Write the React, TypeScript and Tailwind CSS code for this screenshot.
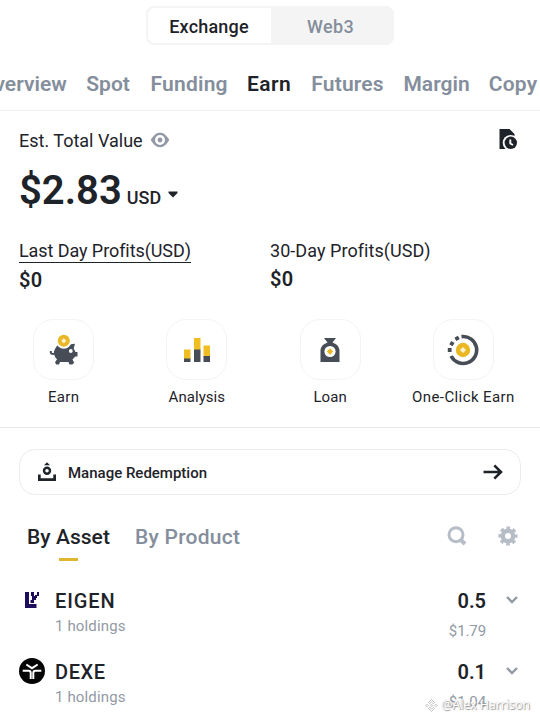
import type { ReactNode } from "react"

const tabs = [
  { label: "Overview", className: "w-[87px] -ml-[20px]" },
  { label: "Spot", className: "w-[45px]" },
  { label: "Funding", className: "w-[77px] tracking-[0.2px]" },
  { label: "Earn", className: "w-[45px] tracking-[0.5px] text-[#1e2329]!" },
  { label: "Futures", className: "w-[73px] tracking-[0.2px]" },
  { label: "Margin", className: "w-[66px]" },
  { label: "Copy", className: "w-[60px] tracking-[0.2px]" },
]

function EyeIcon() {
  return (
    <svg width="20" height="16" viewBox="0 0 20 16" fill="none">
      <path d="M10 .8C6 .8 3.500 3.500.7 8 3.500 12.500 6 15.200 10 15.200S16.500 12.500 19.300 8C16.500 3.500 14 .8 10 .8Z" fill="#929aa5" />
      <circle cx="10" cy="8" r="3.700" stroke="#fff" strokeWidth="2.500" />
    </svg>
  )
}

function HistoryIcon() {
  return (
    <svg width="20" height="22" viewBox="0 0 20 22" fill="none">
      <path d="M1.500 1h10l5 5v5H10v10H1.500Z" fill="#1e2329" />
      <circle cx="12.500" cy="14.800" r="7.800" fill="#fff" />
      <circle cx="12.800" cy="14.800" r="6.200" fill="#1e2329" />
      <path d="M12.300 11.500v4l2.700 1.500" stroke="#fff" strokeWidth="1.900" />
    </svg>
  )
}

function PiggyIcon() {
  return (
    <svg width="30" height="32" viewBox="0 0 30 32" fill="none">
      <path d="M6 15c.8-1.500 1.800-3 3-4h10.500c1.500-.2 3-1.200 6.500-1.200l-1.300 4.700 1.800 3.500h2v4.500h-2.200l-2.800 3 1.700 3.200-2 1.800h-2.700l-1-2.500h-8.500l-1 2.500H7.300l-1.300-2 2-3.300C5.800 23.300 5 21 4.800 18Z" fill="#474d57" />
      <path d="M1.800 17v1.500c0 1 .8 1.500 3.200 1.500" stroke="#474d57" strokeWidth="2" />
      <circle cx="14.800" cy="7" r="7.700" fill="#fff" />
      <circle cx="14.800" cy="6.800" r="6" fill="#e9b824" />
      <path d="m14.800 4.200 2.600 2.600-2.600 2.600-2.600-2.600Z" fill="#fdf3cf" />
      <circle cx="21.800" cy="17" r="1.900" fill="#fff" />
    </svg>
  )
}

function AnalysisIcon() {
  return (
    <svg width="28" height="26" viewBox="0 0 28 26">
      <path d="M1 12.500h6.500V22H1ZM11 1h6.500v12H11ZM20.500 8.500H27V20h-6.500Z" fill="#f0bd22" />
      <path d="M1 21.500h6.500V25H1ZM11 12.500h6.500V25H11ZM20.500 19H27v6h-6.500Z" fill="#474d57" />
    </svg>
  )
}

function LoanIcon() {
  return (
    <svg width="20" height="26" viewBox="0 0 20 26">
      <path d="M4 1h12l-3.500 4.500C17 7 19.500 10 19.500 14v11H.5V14C.5 10 3 7 7.500 5.500Z" fill="#474d57" />
      <circle cx="10" cy="14.500" r="5.600" fill="#fff" />
      <path d="m10 11.300 3.200 3.200-3.200 3.200-3.200-3.200Z" fill="#e9b824" />
    </svg>
  )
}

function OneClickIcon() {
  return (
    <svg width="32" height="32" viewBox="0 0 32 32" fill="none">
      <path d="M14.500 2.600A13.500 13.500 0 1 1 4.100 22" stroke="#474d57" strokeWidth="3.600" />
      <path d="M2.700 18v-4M3.900 11.200l2-3.300M8.400 5.400l3.400-2" stroke="#474d57" strokeWidth="3.800" />
      <circle cx="16" cy="16" r="7.200" fill="#e9b824" />
      <path d="m16 13 3 3-3 3-3-3Z" fill="#fdf3cf" />
    </svg>
  )
}

function RedeemIcon() {
  return (
    <svg width="18" height="20" viewBox="0 0 18 20" fill="none">
      <path d="M1.300 12.500v5.200h15.400v-5.200" stroke="#1e2329" strokeWidth="2.800" />
      <circle cx="9" cy="8.800" r="3" stroke="#1e2329" strokeWidth="2.400" />
      <path d="M9 .3 12 3.300H6Z" fill="#1e2329" />
    </svg>
  )
}

function ArrowIcon() {
  return (
    <svg width="20" height="16" viewBox="0 0 20 16" fill="none" stroke="#1e2329" strokeWidth="2.600">
      <path d="M.5 8h17M11.300 1.300 18 8l-6.700 6.700" />
    </svg>
  )
}

function SearchIcon() {
  return (
    <svg width="20" height="20" viewBox="0 0 20 20" fill="none" stroke="#b7bdc6">
      <circle cx="9" cy="8.700" r="7" strokeWidth="3" />
      <path d="m13.500 13.500 4.500 4.500" strokeWidth="4" />
    </svg>
  )
}

function GearIcon() {
  return (
    <svg width="20" height="20" viewBox="0 0 20 20" fill="none" stroke="#b7bdc6">
      <circle cx="10" cy="10" r="5.200" strokeWidth="4.400" />
      <circle cx="10" cy="10" r="8" strokeWidth="3.200" strokeDasharray="3.500 2.783" strokeDashoffset="1.750" />
    </svg>
  )
}

function ChevronIcon() {
  return (
    <svg width="12" height="8" viewBox="0 0 12 8" fill="none" stroke="#929aa5" strokeWidth="2.400">
      <path d="m1 1 5 5 5-5" />
    </svg>
  )
}

function EigenLogo() {
  return (
    <svg width="26" height="26" viewBox="0 0 26 26" fill="#1e0c5c">
      <path d="M6 5h4v12h7.500v4H6ZM12 5h3v4h2v4h-2v3h-3.500v-3h1.500V9h-1ZM18 5h2v4h-2zM16 8h2v3h-2z" />
    </svg>
  )
}

function DexeLogo() {
  return (
    <svg width="26" height="26" viewBox="0 0 26 26" fill="none">
      <circle cx="13" cy="13" r="13" fill="#050505" />
      <path d="M7.300 6.500 13 10.200l5.700-3.700M3.700 12.700h6q2 0 2 2.300v6M22.300 12.700h-6q-2 0-2 2.300v6" stroke="#fff" strokeWidth="2" />
    </svg>
  )
}

function Shortcut({ label, className, children }: { label: string; className: string; children: ReactNode }) {
  return (
    <div className="flex flex-col items-center">
      <div className="flex h-[61px] w-[61px] items-center justify-center rounded-[20px] border border-[#f3f4f5]">
        {children}
      </div>
      <span className={`mt-[7px] text-[15px] leading-5 whitespace-nowrap ${className}`}>{label}</span>
    </div>
  )
}

interface HoldingProps {
  logo: ReactNode
  name: string
  nameClass: string
  amount: string
  value: string
}

function Holding({ logo, name, nameClass, amount, value }: HoldingProps) {
  return (
    <div className="flex h-[71px] pr-[22px] pl-[19px]">
      <div className="mt-[7px] w-[36px]">{logo}</div>
      <div className="flex-1">
        <div className={`mt-[9px] text-[20px] leading-6 font-medium ${nameClass}`}>{name}</div>
        <div className="mt-[3px] text-[15px] leading-5 tracking-[0.15px] text-[#929aa5]">1 holdings</div>
      </div>
      <div className="text-right">
        <div className="mt-[9px] text-[20px] leading-6 font-semibold">{amount}</div>
        <div className="mt-[8px] text-[15px] leading-5 tracking-[-0.1px] text-[#929aa5]">{value}</div>
      </div>
      <div className="mt-[16px] ml-[20px] w-[12px]">
        <ChevronIcon />
      </div>
    </div>
  )
}

export default function App() {
  return (
    <div className="relative h-[720px] w-[540px] overflow-hidden bg-white font-[Roboto,sans-serif] text-[#1e2329]">
      {/* ACCOUNT SWITCH */}
      <div className="flex justify-center pt-[6px]">
        <div className="flex h-[39px] w-[248px] overflow-hidden rounded-[8px] border-2 border-[#f4f4f4] bg-[#f4f4f4] text-[18px] font-medium">
          <div className="flex w-[123px] items-center justify-center rounded-l-[6px] bg-white pt-[2px] pr-[1px] tracking-[0.2px]">Exchange</div>
          <div className="flex flex-1 items-center justify-center pt-[2px] pr-[2px] tracking-[0.4px] text-[#848e9c]">Web3</div>
        </div>
      </div>

      {/* WALLET TABS */}
      <div className="flex h-[66px] items-center gap-[19.300px] overflow-hidden border-b border-[#eeeff1] pt-[14px] text-[21px] font-semibold whitespace-nowrap text-[#848e9c]">
        {tabs.map((tab) => (
          <span key={tab.label} className={`shrink-0 ${tab.className}`}>{tab.label}</span>
        ))}
      </div>

      {/* BALANCE */}
      <div className="flex h-[59px] items-center pr-[22px] pl-[19px]">
        <span className="text-[18px]">Est. Total Value</span>
        <div className="-mt-[2px] ml-[7px] flex-1">
          <EyeIcon />
        </div>
        <div className="-mt-[3px]">
          <HistoryIcon />
        </div>
      </div>
      <div className="flex h-[49px] items-baseline pt-[1px] pl-[19px] leading-[40px]">
        <span className="text-[40px] font-semibold">$2.83</span>
        <span className="ml-[5px] text-[18px] font-medium">USD</span>
        <svg className="mt-[20px] ml-[7px] self-start" width="10" height="7" viewBox="0 0 10 7" fill="#1e2329">
          <path d="M.5.5h9V2L5 6.500.5 2Z" />
        </svg>
      </div>
      <div className="flex pt-[20px] pl-[19px]">
        <div className="w-[251px]">
          <span className="inline-block h-[24px] border-b border-[#1e2329] text-[18px] leading-[24px] tracking-[-0.08px]">Last Day Profits(USD)</span>
          <div className="mt-[4px] text-[20px] leading-6 font-semibold tracking-[0.3px]">$0</div>
        </div>
        <div>
          <div className="text-[18px] leading-[24px] tracking-[0.05px]">30-Day Profits(USD)</div>
          <div className="mt-[4px] text-[20px] leading-6 font-semibold tracking-[0.3px]">$0</div>
        </div>
      </div>

      {/* SHORTCUTS */}
      <div className="mt-[27px] -ml-[3px] grid h-[108px] w-[533px] grid-cols-4">
        <Shortcut label="Earn" className="tracking-[0.3px]"><PiggyIcon /></Shortcut>
        <Shortcut label="Analysis" className="tracking-[0.05px]"><AnalysisIcon /></Shortcut>
        <Shortcut label="Loan" className="tracking-[0.1px]"><LoanIcon /></Shortcut>
        <Shortcut label="One-Click Earn" className="tracking-[0.4px]"><OneClickIcon /></Shortcut>
      </div>

      <div className="border-t border-[#e6e8ea] px-[19px] pt-[21px]">
        <div className="flex h-[46px] items-center rounded-[16px] border border-[#eaecef] pr-[17px] pl-[18px]">
          <RedeemIcon />
          <span className="ml-[12px] flex-1 pt-[3px] text-[15px] font-medium">Manage Redemption</span>
          <ArrowIcon />
        </div>
      </div>

      {/* ASSET TABS */}
      <div className="flex h-[89px] pt-[27px] pr-[22px] pl-[27px] text-[21px] leading-[30px] font-medium">
        <div className="w-[108px]">
          <div className="tracking-[0.05px]">By Asset</div>
          <div className="mt-[6px] ml-[32px] h-[3px] w-[19px] bg-[#e0b62f]" />
        </div>
        <div className="flex-1 tracking-[0.25px] text-[#848e9c]">By Product</div>
        <div className="flex gap-[31px] pt-[4px]">
          <SearchIcon />
          <GearIcon />
        </div>
      </div>

      {/* HOLDINGS */}
      <div className="-mt-[4px]">
        <Holding logo={<EigenLogo />} name="EIGEN" nameClass="tracking-[0.9px]" amount="0.5" value="$1.79" />
        <Holding logo={<DexeLogo />} name="DEXE" nameClass="tracking-[0.6px]" amount="0.1" value="$1.04" />
      </div>

      {/* WATERMARK */}
      <div className="absolute top-[695px] right-[10px] flex items-center gap-[3px] font-['Noto_Sans',sans-serif] text-[12.500px] leading-5 tracking-[-0.1px] text-white [text-shadow:1px_1px_1px_#999,0_0_1px_#bbb]">
        <svg width="13" height="13" viewBox="0 0 13 13" fill="#fff" stroke="#aaa" strokeWidth=".7">
          <path d="m6.500.5 3 3-1.200 1.200-1.800-1.800-1.800 1.800-1.200-1.200ZM2 5.200l1.300 1.300L2 7.800.7 6.500ZM11 5.200l1.300 1.300L11 7.800 9.700 6.500ZM6.500 5.200l1.300 1.300-1.300 1.300-1.300-1.300ZM6.500 12.500l-3-3 1.200-1.200 1.800 1.800 1.800-1.800 1.200 1.200Z" />
        </svg>
        <span>@Alex Harrison</span>
      </div>
    </div>
  )
}
